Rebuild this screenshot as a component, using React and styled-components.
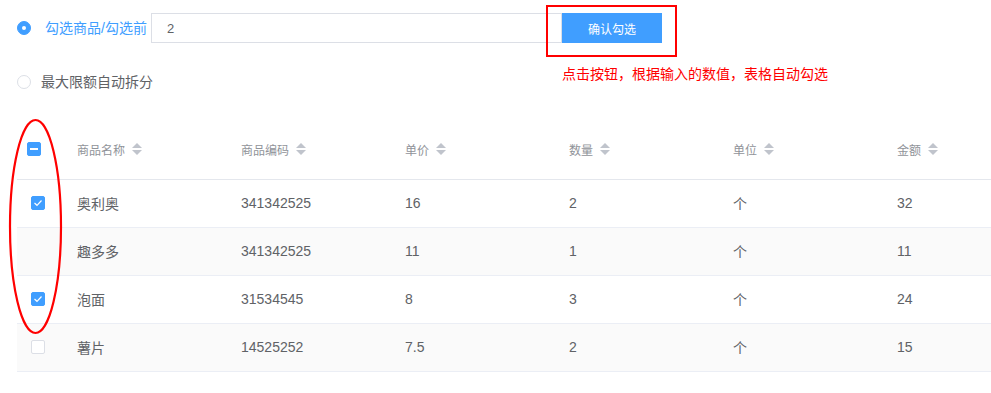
import React from "react";
import styled, { createGlobalStyle } from "styled-components";

const Global = createGlobalStyle`
  html, body { margin: 0; padding: 0; background: #fff; }
  body { font-family: "Liberation Sans", "Noto Sans CJK SC", sans-serif; color: #606266; }
  * { box-sizing: border-box; }
`;

const Page = styled.div`
  position: relative;
  width: 991px;
  height: 393px;
  overflow: hidden;
`;

const Top = styled.div`
  padding: 13px 0 0 17px;
`;

const ChooseRow = styled.div`
  display: flex;
  align-items: center;
  height: 30px;
`;

const OptionRow = styled.div`
  display: flex;
  align-items: center;
  height: 18px;
  margin-top: 30px;
`;

const Radio = styled.span`
  width: 14px;
  height: 14px;
  border-radius: 50%;
  flex: none;
  border: 1px solid ${(p) => (p.$on ? "#409EFF" : "#DCDFE6")};
  background: ${(p) => (p.$on ? "#409EFF" : "#fff")};
  display: flex;
  align-items: center;
  justify-content: center;
  &::after {
    content: "";
    width: 4px;
    height: 4px;
    border-radius: 50%;
    background: #fff;
    display: ${(p) => (p.$on ? "block" : "none")};
  }
`;

const RadioLabel = styled.span`
  font-size: 14px;
  line-height: 18px;
  margin-left: ${(p) => p.$gap}px;
  color: ${(p) => (p.$on ? "#409EFF" : "#606266")};
  white-space: nowrap;
`;

const Input = styled.div`
  margin-left: 4px;
  width: 411px;
  height: 30px;
  border: 1px solid #DCDFE6;
  padding-left: 15px;
  display: flex;
  align-items: center;
  font-size: 13px;
  color: #606266;
`;

const Button = styled.button`
  width: 100px;
  height: 30px;
  border: 0;
  background: #409EFF;
  color: #fff;
  font-family: inherit;
  font-size: 12px;
  padding: 0;
`;

const RedBox = styled.div`
  position: absolute;
  left: 546px;
  top: 5px;
  width: 131px;
  height: 52px;
  border: 2px solid #FF0000;
`;

const Hint = styled.div`
  position: absolute;
  left: 562px;
  top: 66px;
  font-size: 14px;
  line-height: 16px;
  color: #FF0000;
  white-space: nowrap;
`;

const Oval = styled.svg`
  position: absolute;
  left: 0;
  top: 110px;
  pointer-events: none;
`;

const Table = styled.table`
  margin: 29px 0 0 17px;
  width: 974px;
  border-collapse: collapse;
  table-layout: fixed;
`;

const HeadCell = styled.th`
  height: 59px;
  padding: 0 0 0 ${(p) => p.$pad || 10}px;
  text-align: left;
  font-weight: normal;
  font-size: 12px;
  color: #909399;
  border-bottom: 1px solid #E4E7ED;
  vertical-align: middle;
`;

const HeadInner = styled.div`
  display: flex;
  align-items: center;
  gap: 7px;
`;

const Caret = styled.span`
  display: flex;
  flex-direction: column;
  gap: 2px;
  &::before, &::after {
    content: "";
    width: 0;
    height: 0;
    border-left: 5px solid transparent;
    border-right: 5px solid transparent;
  }
  &::before { border-bottom: 5px solid #C0C4CC; }
  &::after { border-top: 5px solid #C0C4CC; }
`;

const Row = styled.tr`
  background: ${(p) => (p.$striped ? "#FAFAFA" : "#fff")};
`;

const Cell = styled.td`
  height: 48px;
  padding: 0 0 0 ${(p) => p.$pad || 10}px;
  font-size: 14px;
  color: #606266;
  border-bottom: 1px solid #EBEEF5;
  vertical-align: middle;
  white-space: nowrap;
`;

const Box = styled.span`
  width: 14px;
  height: 14px;
  border-radius: 2px;
  display: flex;
  align-items: center;
  justify-content: center;
  border: 1px solid ${(p) => (p.$state ? "#409EFF" : "#DCDFE6")};
  background: ${(p) => (p.$state ? "#409EFF" : "#fff")};
`;

const Dash = styled.span`
  width: 8px;
  height: 2px;
  background: #fff;
`;

const Check = () => (
  <svg width="10" height="8" viewBox="0 0 10 8">
    <path d="M1.5 4 L4 6.3 L8.5 1.5" fill="none" stroke="#fff" strokeWidth="1.2" />
  </svg>
);

const Checkbox = ({ state }) => (
  <Box $state={state}>
    {state === "half" && <Dash />}
    {state === "on" && <Check />}
  </Box>
);

const columns = ["商品名称", "商品编码", "单价", "数量", "单位", "金额"];
const rows = [
  { on: true, v: ["奥利奥", "341342525", "16", "2", "个", "32"] },
  { on: false, v: ["趣多多", "341342525", "11", "1", "个", "11"] },
  { on: true, v: ["泡面", "31534545", "8", "3", "个", "24"] },
  { on: false, v: ["薯片", "14525252", "7.5", "2", "个", "15"] },
];

export default function App() {
  return (
    <Page>
      <Global />
      <Top>
        <ChooseRow>
          <Radio $on />
          <RadioLabel $on $gap={14}>勾选商品/勾选前</RadioLabel>
          <Input>2</Input>
          <Button>确认勾选</Button>
        </ChooseRow>
        <OptionRow>
          <Radio />
          <RadioLabel $gap={10}>最大限额自动拆分</RadioLabel>
        </OptionRow>
      </Top>
      <Table>
        <colgroup>
          <col style={{ width: 50 }} />
          <col style={{ width: 164 }} />
          <col style={{ width: 164 }} />
          <col style={{ width: 164 }} />
          <col style={{ width: 164 }} />
          <col style={{ width: 164 }} />
          <col style={{ width: 104 }} />
        </colgroup>
        <thead>
          <tr>
            <HeadCell $pad={10}>
              <Checkbox state="half" />
            </HeadCell>
            {columns.map((c) => (
              <HeadCell key={c}>
                <HeadInner>
                  {c}
                  <Caret />
                </HeadInner>
              </HeadCell>
            ))}
          </tr>
        </thead>
        <tbody>
          {rows.map((r, i) => (
            <Row key={i} $striped={i % 2 === 1}>
              <Cell $pad={14}>
                {r.on ? <Checkbox state="on" /> : i === 3 ? <Checkbox /> : null}
              </Cell>
              {r.v.map((t, j) => (
                <Cell key={j}>{t}</Cell>
              ))}
            </Row>
          ))}
        </tbody>
      </Table>
      <RedBox />
      <Hint>点击按钮，根据输入的数值，表格自动勾选</Hint>
      <Oval width="80" height="240" viewBox="0 0 80 240">
        <ellipse cx="35.5" cy="116.5" rx="25.5" ry="106.5" fill="none" stroke="#FF0000" strokeWidth="2.2" />
      </Oval>
    </Page>
  );
}
